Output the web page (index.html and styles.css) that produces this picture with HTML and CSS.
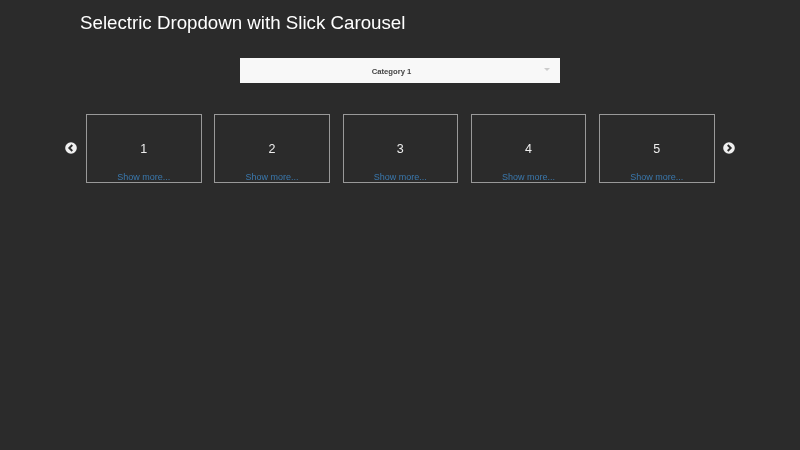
FILE: index.html
```html
<!DOCTYPE html>
<html lang="en">
<head>
  <meta charset="UTF-8">
  <meta name="viewport" content="width=device-width, initial-scale=1.0">
  <title>Selectric Dropdown with Slick Carousel</title>
  <link rel="stylesheet" href="styles.css">
</head>
<body>
  <div class="container">
    <h1>Selectric Dropdown with Slick Carousel</h1>

    <!-- Dropdown -->
    <div class="select-row">
      <div class="selectric">
        <span class="label">Category 1</span>
        <span class="arrow"></span>
      </div>
    </div>

    <!-- Carousel -->
    <div class="carousel">
      <button class="nav prev" aria-label="Previous">
        <svg viewBox="0 0 12 12" width="12" height="12">
          <circle cx="6" cy="6" r="5.8" fill="#f0f0f0"/>
          <path d="M7.3 3 L4.3 6 L7.3 9" fill="none" stroke="#2b2b2b" stroke-width="1.9"/>
        </svg>
      </button>
      <div class="track">
        <div class="card"><span class="num">1</span><a class="more" href="#">Show more...</a></div>
        <div class="card"><span class="num">2</span><a class="more" href="#">Show more...</a></div>
        <div class="card"><span class="num">3</span><a class="more" href="#">Show more...</a></div>
        <div class="card"><span class="num">4</span><a class="more" href="#">Show more...</a></div>
        <div class="card"><span class="num">5</span><a class="more" href="#">Show more...</a></div>
      </div>
      <button class="nav next" aria-label="Next">
        <svg viewBox="0 0 12 12" width="12" height="12">
          <circle cx="6" cy="6" r="5.8" fill="#f0f0f0"/>
          <path d="M4.7 3 L7.7 6 L4.7 9" fill="none" stroke="#2b2b2b" stroke-width="1.9"/>
        </svg>
      </button>
    </div>
  </div>
</body>
</html>
```

FILE: styles.css
```css
body {
  font-family: "Liberation Sans", Arial, sans-serif;
  margin: 0;
  min-height: 100vh;
  background-color: #2b2b2b;
  color: #fff;
}
.container {
  width: 640px;
  margin: 0 auto;
  transform: translate3d(0, 0, 0);
}
h1 {
  margin: 0;
  padding-top: 12px;
  font-size: 18.72px;
  line-height: 22px;
  font-weight: normal;
}
.select-row {
  display: flex;
  justify-content: center;
  margin-top: 24px;
}
.selectric {
  position: relative;
  box-sizing: border-box;
  width: 320px;
  height: 25px;
  padding-right: 17px;
  line-height: 27px;
  text-align: center;
  background-color: #f8f8f8;
  color: #444;
  font-size: 7.7px;
  font-weight: bold;
}
.arrow {
  position: absolute;
  top: 10px;
  right: 10px;
  border-left: 3px solid transparent;
  border-right: 3px solid transparent;
  border-top: 3px solid #ccc;
}
.carousel {
  position: relative;
  margin-top: 31px;
}
.track {
  display: flex;
  justify-content: space-between;
  padding: 0 6.5px 0 6px;
  width: 641px;
  box-sizing: border-box;
}
.card {
  display: flex;
  flex-direction: column;
  align-items: center;
  box-sizing: border-box;
  width: 115.5px;
  height: 69px;
  border: 1px solid #999;
}
.num {
  margin-top: 27px;
  font-size: 12.5px;
  line-height: 14px;
  color: #eee;
}
.more {
  margin-top: 16px;
  font-size: 9px;
  line-height: 11px;
  color: #3a78ad;
  text-decoration: none;
}
.nav {
  position: absolute;
  top: 28px;
  padding: 0;
  width: 12px;
  height: 12px;
  border: none;
  background: none;
  display: flex;
}
.prev {
  left: -15.5px;
}
.next {
  right: -15.25px;
}
```
